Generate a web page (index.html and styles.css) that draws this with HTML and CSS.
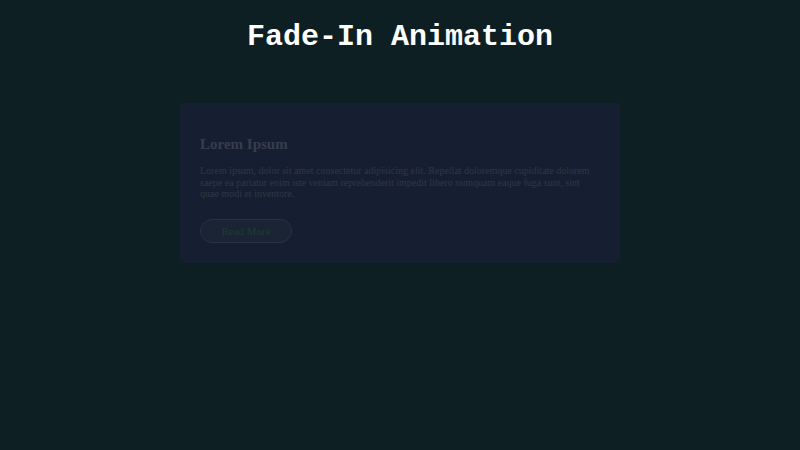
FILE: index.html
```html
<!DOCTYPE html>
<html lang="en">
<head>
    <meta charset="UTF-8">
    <meta name="viewport" content="width=device-width, initial-scale=1.0">
    <title>Fade-In Animation</title>
    <link rel="stylesheet" href="styles.css">
</head>
<body>
    <h1 class="page-title">Fade-In Animation</h1>

    <div class="card fade-in">
        <h2 class="card-title">Lorem Ipsum</h2>
        <p class="card-text">Lorem ipsum, dolor sit amet consectetur adipisicing elit. Repellat doloremque cupiditate dolorem saepe ea pariatur enim iste veniam reprehenderit impedit libero numquam eaque fuga sunt, sint quae modi et inventore.</p>
        <button class="card-button">Read More</button>
    </div>
</body>
</html>
```

FILE: styles.css
```css
body {
    margin: 0;
    background: #0d1f22;
    font-family: 'Liberation Serif', serif;
    display: flex;
    flex-direction: column;
    align-items: center;
}
.page-title {
    font-family: 'Liberation Mono', monospace;
    font-size: 30px;
    font-weight: bold;
    color: #ffffff;
    margin: 20px 0 49px;
}
.card {
    box-sizing: border-box;
    width: 440px;
    padding: 20px;
    background: #161f32;
    border-radius: 4px;
}
.card-title {
    font-size: 15px;
    color: #363d4c;
    margin: 13px 0 12px;
}
.card-text {
    font-size: 10px;
    line-height: 11.5px;
    color: #2f3747;
    margin: 0 0 19px;
}
.card-button {
    display: block;
    font-family: 'Liberation Serif', serif;
    font-size: 11px;
    color: #1f3b37;
    background: #1b2435;
    border: 1px solid #293242;
    border-radius: 12px;
    padding: 4px 0;
    width: 92px;
    height: 24px;
}
```
